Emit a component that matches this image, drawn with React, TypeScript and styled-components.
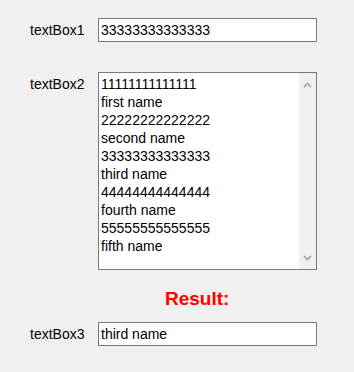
import { createGlobalStyle } from "styled-components";
import styled from "styled-components";

// global
const GlobalStyle = createGlobalStyle`
  html, body {
    margin: 0;
    padding: 0;
    background: #f0f0f0;
  }
  body {
    font-family: "Liberation Sans", Arial, sans-serif;
    font-size: 14px;
    color: #000;
  }
`;

const lines = [
  "11111111111111",
  "first name",
  "22222222222222",
  "second name",
  "33333333333333",
  "third name",
  "44444444444444",
  "fourth name",
  "55555555555555",
  "fifth name",
];

const Chevron = ({ down }: { down?: boolean }) => (
  <svg width="9" height="6" viewBox="0 0 9 6">
    <path
      d={down ? "M1 1 L4.5 4.5 L8 1" : "M1 5 L4.5 1.5 L8 5"}
      fill="none"
      stroke="#a3a3a3"
      strokeWidth="1.6"
    />
  </svg>
);

const App = () => {
  return (
    <FormStyle>
      <GlobalStyle />
      <Row $align="center">
        <Label>textBox1</Label>
        <TextBox readOnly value="33333333333333" />
      </Row>
      <Row $align="flex-start" $top={30}>
        <Label $pad={4}>textBox2</Label>
        <MultiBox>
          <Lines>
            {lines.map((l, i) => (
              <div key={i}>{l}</div>
            ))}
          </Lines>
          <ScrollBar>
            <Chevron />
            <Chevron down />
          </ScrollBar>
        </MultiBox>
      </Row>
      <Result>Result:</Result>
      <Row $align="center" $top={12}>
        <Label>textBox3</Label>
        <TextBox readOnly value="third name" />
      </Row>
    </FormStyle>
  );
};

export default App;

const FormStyle = styled.div`
  display: flex;
  flex-direction: column;
  padding: 18px 0 0 30px;
  width: 354px;
  height: 372px;
  box-sizing: border-box;
`;

const Row = styled.div<{ $align: string; $top?: number }>`
  display: flex;
  align-items: ${(p) => p.$align};
  margin-top: ${(p) => p.$top ?? 0}px;
`;

const Label = styled.div<{ $pad?: number }>`
  width: 68px;
  padding-top: ${(p) => p.$pad ?? 0}px;
  line-height: 16px;
`;

const TextBox = styled.input`
  width: 219px;
  height: 24px;
  box-sizing: border-box;
  border: 1px solid #7a7a7a;
  background: #fff;
  padding: 0 2px;
  margin: 0;
  font-family: "Liberation Sans", Arial, sans-serif;
  font-size: 14px;
  color: #000;
  outline: none;
`;

const MultiBox = styled.div`
  display: flex;
  width: 219px;
  height: 198px;
  box-sizing: border-box;
  border: 1px solid #7a7a7a;
  background: #fff;
`;

const Lines = styled.div`
  flex: 1;
  padding: 2px 0 0 2px;
  line-height: 18px;
`;

const ScrollBar = styled.div`
  width: 17px;
  background: #f0f0f0;
  display: flex;
  flex-direction: column;
  justify-content: space-between;
  align-items: center;
  padding: 9px 0 8px;
  box-sizing: border-box;
`;

const Result = styled.div`
  margin: 18px 0 0 135px;
  color: #ff0000;
  font-weight: bold;
  font-size: 19px;
  line-height: 22px;
`;
